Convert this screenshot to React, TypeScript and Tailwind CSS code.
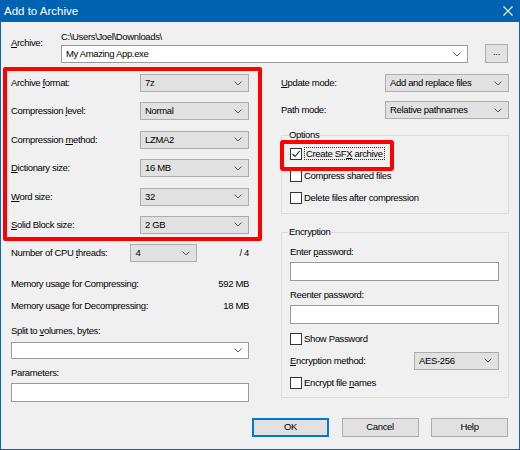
import type { ReactNode } from "react";

// Windows 10 style "Add to Archive" dialog (7-Zip)

const Key = ({ children }: { children: ReactNode }) => (
  <span className="underline underline-offset-[1px]">{children}</span>
);

const Chevron = () => (
  <svg width="8" height="5" viewBox="0 0 8 5" className="shrink-0">
    <path d="M0.5 0.5 L4 4 L7.5 0.5" fill="none" stroke="#5a5a5a" strokeWidth="1" />
  </svg>
);

// non-editable combo box (grey)
const Select = ({ value, className = "" }: { value: string; className?: string }) => (
  <div
    className={
      "flex h-[18px] items-center justify-between border border-[#adadad] bg-[#e1e1e1] pl-[4px] pr-[6px] " +
      className
    }
  >
    <span>{value}</span>
    <Chevron />
  </div>
);

// editable combo box (white)
const Combo = ({ value = "", className = "" }: { value?: string; className?: string }) => (
  <div
    className={
      "flex items-center justify-between border border-[#9b9b9b] bg-white pl-[3px] pr-[6px] " + className
    }
  >
    <span>{value}</span>
    <Chevron />
  </div>
);

const TextBox = ({ className = "" }: { className?: string }) => (
  <div className={"h-[19px] border border-[#9b9b9b] bg-white " + className} />
);

const Check = ({ checked = false, children }: { checked?: boolean; children: ReactNode }) => (
  <div className="flex h-[12px] items-center">
    <div className="flex h-[12px] w-[12px] shrink-0 items-center justify-center border border-[#333] bg-white">
      {checked && (
        <svg width="10" height="10" viewBox="0 0 10 10">
          <path d="M1.5 5 L4 7.5 L8.7 2" fill="none" stroke="#222" strokeWidth="1.1" />
        </svg>
      )}
    </div>
    <span className="ml-[2px] whitespace-nowrap">{children}</span>
  </div>
);

const Row = ({ label, children }: { label: ReactNode; children: ReactNode }) => (
  <div className="flex h-[18px] items-center">
    <div className="flex-1">{label}</div>
    {children}
  </div>
);

const Group = ({ title, children, className = "" }: { title: string; children: ReactNode; className?: string }) => (
  <div className={"relative border border-[#dcdcdc] " + className}>
    <span className="absolute -top-[7px] left-[6px] bg-[#f0f0f0] px-[1px] leading-[12px]">{title}</span>
    {children}
  </div>
);

const Button = ({ children, primary = false }: { children: ReactNode; primary?: boolean }) => (
  <div
    className={
      "flex h-[19px] w-[77px] items-center justify-center bg-[#e1e1e1] " +
      (primary ? "border-2 border-[#0078d7]" : "border border-[#adadad]")
    }
  >
    {children}
  </div>
);

export default function App() {
  return (
    <div
      className="h-[450px] w-[520px] overflow-hidden bg-[#0d63b5] text-[9.5px] leading-[12px] tracking-[-0.35px] text-black"
      style={{ fontFamily: '"Liberation Sans", Arial, sans-serif' }}
    >
      {/* title bar */}
      <div className="flex h-[22px] items-center justify-between bg-[#0063b1] pl-[4px] pr-[7px] text-[11.5px] tracking-[0px] text-white">
        <span>Add to Archive</span>
        <svg width="10" height="10" viewBox="0 0 10 10">
          <path d="M0.5 0.5 L9.5 9.5 M9.5 0.5 L0.5 9.5" stroke="#fff" strokeWidth="1.1" />
        </svg>
      </div>

      <div className="relative mx-[1px] h-[427px] bg-[#f0f0f0] px-[10px] pt-[8px]">
        {/* archive path */}
        <div className="flex">
          <div className="mt-[7px] w-[50px]">
            <Key>A</Key>rchive:
          </div>
          <div className="flex flex-1 flex-col">
            <div className="leading-[14px]">C:\Users\Joel\Downloads\</div>
            <div className="mt-[1px] flex">
              <Combo value="My Amazing App.exe" className="h-[18px] w-[407px] pl-[4px]" />
              <div className="-mt-[1px] ml-[17px] flex h-[19px] w-[23px] items-center justify-center border border-[#adadad] bg-[#e1e1e1] pb-[3px]">
                ...
              </div>
            </div>
          </div>
        </div>

        <div className="mt-[11px] flex justify-between">
          {/* left column */}
          <div className="flex w-[238px] flex-col">
            <div className="flex flex-col gap-[10.4px]">
              <Row label={<>Archive <Key>f</Key>ormat:</>}>
                <Select value="7z" className="w-[109px]" />
              </Row>
              <Row label={<>Compression <Key>l</Key>evel:</>}>
                <Select value="Normal" className="w-[109px]" />
              </Row>
              <Row label={<>Compression <Key>m</Key>ethod:</>}>
                <Select value="LZMA2" className="w-[109px]" />
              </Row>
              <Row label={<><Key>D</Key>ictionary size:</>}>
                <Select value="16 MB" className="w-[109px]" />
              </Row>
              <Row label={<><Key>W</Key>ord size:</>}>
                <Select value="32" className="w-[109px]" />
              </Row>
              <Row label={<><Key>S</Key>olid Block size:</>}>
                <Select value="2 GB" className="w-[109px]" />
              </Row>
              <Row label={<>Number of CPU <Key>t</Key>hreads:</>}>
                <Select value="4" className="mr-[42px] w-[67px]" />
                <span>/ 4</span>
              </Row>
            </div>

            <div className="mt-[15.5px] flex justify-between">
              <span>Memory usage for Compressing:</span>
              <span>592 MB</span>
            </div>
            <div className="mt-[10px] flex justify-between">
              <span>Memory usage for Decompressing:</span>
              <span>18 MB</span>
            </div>

            <div className="mt-[13px]">
              Split to <Key>v</Key>olumes, bytes:
            </div>
            <Combo className="mt-[5px] h-[17px]" />

            <div className="mt-[8px]">Parameters:</div>
            <TextBox className="mt-[4px]" />
          </div>

          {/* right column */}
          <div className="flex w-[228px] flex-col">
            <div className="flex flex-col gap-[9px]">
              <Row label={<><Key>U</Key>pdate mode:</>}>
                <Select value="Add and replace files" className="w-[124px]" />
              </Row>
              <Row label="Path mode:">
                <Select value="Relative pathnames" className="w-[124px]" />
              </Row>
            </div>

            <Group title="Options" className="mt-[16px] px-[8px] pb-[9px] pt-[12px]">
              <div className="flex flex-col gap-[10px]">
                <Check checked>
                  <span className="border border-dotted border-[#333] px-[1px]">
                    Create SF<Key>X</Key> archive
                  </span>
                </Check>
                <Check>Compress shared files</Check>
                <Check>Delete files after compression</Check>
              </div>
            </Group>

            <Group title="Encryption" className="mt-[18px] pb-[8px] pl-[8px] pr-[9px] pt-[13px]">
              <div>
                Enter <Key>p</Key>assword:
              </div>
              <TextBox className="mt-[4px]" />
              <div className="mt-[8px]">Reenter password:</div>
              <TextBox className="mt-[4px]" />
              <div className="mt-[9px]">
                <Check>Show Password</Check>
              </div>
              <div className="mt-[7px] flex h-[17px] items-center justify-between">
                <span>
                  <Key>E</Key>ncryption method:
                </span>
                <Select value="AES-256" className="h-[17px] w-[85px]" />
              </div>
              <div className="mt-[8px]">
                <Check>
                  Encrypt file <Key>n</Key>ames
                </Check>
              </div>
            </Group>
          </div>
        </div>

        {/* buttons */}
        <div className="mr-[1px] mt-[16px] flex justify-end gap-[12.5px]">
          <Button primary>OK</Button>
          <Button>Cancel</Button>
          <Button>Help</Button>
        </div>

        {/* red highlight overlays */}
        <div className="pointer-events-none absolute left-[2px] top-[45px] h-[174px] w-[259px] rounded-[2px] border-[4px] border-[#ff0000]" />
        <div className="pointer-events-none absolute left-[279px] top-[118px] h-[31px] w-[114px] rounded-[3px] border-[4px] border-[#ff0000]" />
      </div>
    </div>
  );
}
